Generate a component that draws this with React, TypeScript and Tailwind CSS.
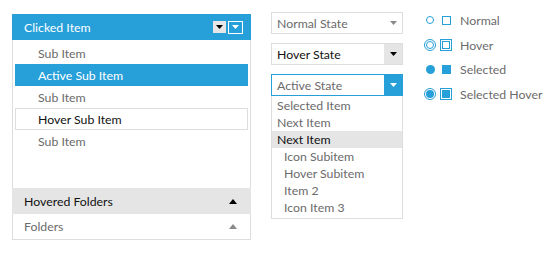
import React from "react";

const font = { fontFamily: 'Lato, "Noto Sans", sans-serif' };

function Down({ color, w = 7, h = 4 }: { color: string; w?: number; h?: number }) {
  return (
    <svg width={w} height={h} viewBox={`0 0 ${w} ${h}`}>
      <polygon points={`0,0 ${w},0 ${w / 2},${h}`} fill={color} />
    </svg>
  );
}
function Up({ color }: { color: string }) {
  return (
    <svg width={8} height={5} viewBox="0 0 8 5">
      <polygon points="0,5 8,5 4,0" fill={color} />
    </svg>
  );
}

function T({ children }: { children: React.ReactNode }) {
  return <span className="pt-[2px]">{children}</span>;
}

export default function App() {
  return (
    <div className="w-[552px] h-[254px] bg-white flex items-start text-[12.3px] leading-none" style={font}>
      {/* Left panel */}
      <div className="ml-[12px] mt-[14px] w-[239px] flex flex-col">
        <div className="h-[26px] bg-[#27a0da] flex items-center justify-between pl-[12px] pr-[8px] text-white">
          <T>Clicked Item</T>
          <div className="flex items-center gap-[2px]">
            <div className="w-[13px] h-[12px] bg-[#e6e6e6] flex items-center justify-center">
              <Down color="#000" />
            </div>
            <div className="w-[15px] h-[13px] border border-white flex items-center justify-center">
              <Down color="#fff" />
            </div>
          </div>
        </div>
        <div className="h-[148px] border-x border-[#dddddd] px-[2px] pt-[2px] flex flex-col">
          <div className="h-[22px] flex items-center pl-[23px] text-[#6b6b6b]"><T>Sub Item</T></div>
          <div className="h-[22px] flex items-center pl-[23px] bg-[#27a0da] text-white"><T>Active Sub Item</T></div>
          <div className="h-[22px] flex items-center pl-[23px] text-[#6b6b6b]"><T>Sub Item</T></div>
          <div className="h-[22px] flex items-center pl-[22px] border border-[#dddddd] text-[#111]"><T>Hover Sub Item</T></div>
          <div className="h-[22px] flex items-center pl-[23px] text-[#6b6b6b]"><T>Sub Item</T></div>
        </div>
        <div className="h-[26px] bg-[#e5e5e5] flex items-center justify-between pl-[12px] pr-[14px] text-[#111]">
          <T>Hovered Folders</T>
          <Up color="#000" />
        </div>
        <div className="h-[26px] border-x border-b border-[#dddddd] flex items-center justify-between pl-[11px] pr-[13px] text-[#6b6b6b]">
          <T>Folders</T>
          <Up color="#8a8a8a" />
        </div>
      </div>

      {/* Middle dropdowns */}
      <div className="ml-[20px] mt-[12px] w-[132px] flex flex-col">
        <div className="h-[22px] border border-[#dddddd] flex items-center justify-between pl-[5px] pr-[5px] text-[#6b6b6b]">
          <T>Normal State</T>
          <Down color="#8a8a8a" />
        </div>
        <div className="mt-[9px] h-[22px] border border-[#dddddd] flex items-center justify-between pl-[5px] text-[#111]">
          <T>Hover State</T>
          <div className="w-[18px] h-full bg-[#e5e5e5] flex items-center justify-center">
            <Down color="#000" />
          </div>
        </div>
        <div className="mt-[9px] h-[22px] border border-[#27a0da] flex items-center justify-between pl-[5px] text-[#6b6b6b]">
          <T>Active State</T>
          <div className="w-[18px] h-full bg-[#27a0da] flex items-center justify-center">
            <Down color="#fff" />
          </div>
        </div>
        <div className="border-x border-b border-[#dddddd] pt-[1px] pb-[2px] flex flex-col text-[#6b6b6b]">
          <div className="h-[17px] flex items-center pl-[5px]"><T>Selected Item</T></div>
          <div className="h-[17px] flex items-center pl-[5px]"><T>Next Item</T></div>
          <div className="h-[17px] flex items-center pl-[5px] bg-[#e5e5e5] text-[#111]"><T>Next Item</T></div>
          <div className="h-[17px] flex items-center pl-[12px]"><T>Icon Subitem</T></div>
          <div className="h-[17px] flex items-center pl-[12px]"><T>Hover Subitem</T></div>
          <div className="h-[17px] flex items-center pl-[12px]"><T>Item 2</T></div>
          <div className="h-[17px] flex items-center pl-[12px]"><T>Icon Item 3</T></div>
        </div>
      </div>

      {/* Right radios/checks */}
      <div className="ml-[21px] mt-[8px] flex flex-col text-[#6b6b6b]">
        <div className="h-[24.5px] flex items-center">
          <div className="w-[12px] flex justify-center">
            <div className="w-[8px] h-[8px] rounded-full border border-[#27a0da]" />
          </div>
          <div className="ml-[4px] w-[12px] flex justify-center">
            <div className="w-[9px] h-[9px] border border-[#27a0da]" />
          </div>
          <span className="ml-[8px] pt-[2px]">Normal</span>
        </div>
        <div className="h-[24.5px] flex items-center">
          <div className="w-[12px] flex justify-center">
            <div className="w-[12px] h-[12px] rounded-full border border-[#27a0da] flex items-center justify-center">
              <div className="w-[8px] h-[8px] rounded-full border border-[#27a0da]" />
            </div>
          </div>
          <div className="ml-[4px] w-[12px] flex justify-center">
            <div className="w-[12px] h-[12px] border border-[#27a0da] flex items-center justify-center">
              <div className="w-[8px] h-[8px] border border-[#27a0da]" />
            </div>
          </div>
          <span className="ml-[8px] pt-[2px]">Hover</span>
        </div>
        <div className="h-[24.5px] flex items-center">
          <div className="w-[12px] flex justify-center">
            <div className="w-[9px] h-[9px] rounded-full bg-[#27a0da]" />
          </div>
          <div className="ml-[4px] w-[12px] flex justify-center">
            <div className="w-[9px] h-[9px] bg-[#27a0da]" />
          </div>
          <span className="ml-[8px] pt-[2px]">Selected</span>
        </div>
        <div className="h-[24.5px] flex items-center">
          <div className="w-[12px] flex justify-center">
            <div className="w-[12px] h-[12px] rounded-full border border-[#27a0da] flex items-center justify-center">
              <div className="w-[8px] h-[8px] rounded-full bg-[#27a0da]" />
            </div>
          </div>
          <div className="ml-[4px] w-[12px] flex justify-center">
            <div className="w-[12px] h-[12px] border border-[#27a0da] flex items-center justify-center">
              <div className="w-[8px] h-[8px] bg-[#27a0da]" />
            </div>
          </div>
          <span className="ml-[8px] pt-[2px]">Selected Hover</span>
        </div>
      </div>
    </div>
  );
}
